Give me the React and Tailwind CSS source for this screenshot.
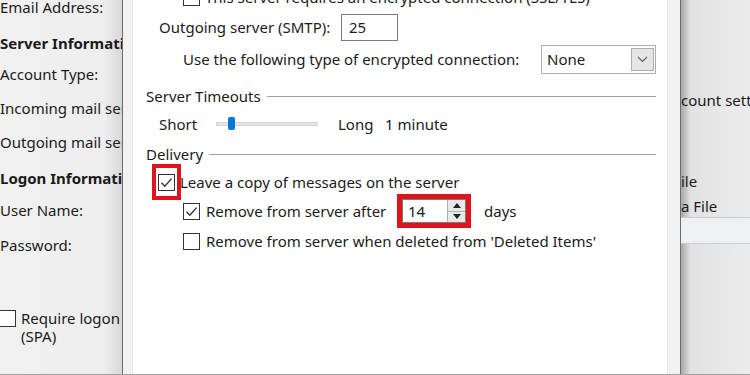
import React from "react";

function Check({ checked }) {
  return (
    <span className="inline-flex w-[17px] h-[17px] shrink-0 border border-[#333333] bg-white items-center justify-center">
      {checked && (
        <svg width="13" height="13" viewBox="0 0 13 13">
          <path d="M1.5 6.8 L4.8 10.2 L11.6 2.6" fill="none" stroke="#333333" strokeWidth="1.4" />
        </svg>
      )}
    </span>
  );
}

function LeftPanel() {
  return (
    <div className="w-[122px] shrink-0 h-full overflow-hidden bg-linear-to-r from-[#f1f1f1] via-[#eeeeee] via-85% to-[#d8d8d8] whitespace-nowrap">
      <div className="h-[20px] leading-[20px] mt-[-3px]">Email Address:</div>
      <div className="h-[20px] leading-[20px] mt-[16px] font-bold">Server Information</div>
      <div className="h-[20px] leading-[20px] mt-[11px]">Account Type:</div>
      <div className="h-[20px] leading-[20px] mt-[14px]">Incoming mail server:</div>
      <div className="h-[20px] leading-[20px] mt-[14px]">Outgoing mail server (SMTP):</div>
      <div className="h-[20px] leading-[20px] mt-[16px] font-bold">Logon Information</div>
      <div className="h-[20px] leading-[20px] mt-[12px]">User Name:</div>
      <div className="h-[20px] leading-[20px] mt-[15px]">Password:</div>
      <div className="flex mt-[54px] ml-[-1px]">
        <div className="pt-[1px]">
          <Check />
        </div>
        <div className="ml-[5px] leading-[18px]">
          <div>Require logon using Secure Password Authentication</div>
          <div>(SPA)</div>
        </div>
      </div>
    </div>
  );
}

function DialogContent() {
  return (
    <div className="w-[534px] shrink-0 h-full bg-white whitespace-nowrap pr-[11px]">
      {/* Row 1 cut at top */}
      <div className="flex items-center h-[22px] mt-[-14px] pl-[50px]">
        <Check />
        <span className="ml-[5px]">This server requires an encrypted connection (SSL/TLS)</span>
      </div>
      {/* SMTP */}
      <div className="flex items-center h-[27px] mt-[6px] pl-[26px]">
        <span className="w-[182px]">Outgoing server (SMTP):</span>
        <div className="w-[57px] h-[27px] border border-[#7a7a7a] flex items-center pl-[7px]">25</div>
      </div>
      {/* Encryption */}
      <div className="flex items-center h-[29px] mt-[4px] pl-[50px]">
        <span className="w-[358px]">Use the following type of encrypted connection:</span>
        <div className="w-[115px] h-[29px] border border-[#adadad] flex items-center justify-between pl-[5px] pr-[1px]">
          <span>None</span>
          <span className="w-[23px] h-[23px] bg-[#e5e5e5] border border-[#adadad] flex items-center justify-center">
            <svg width="11" height="7" viewBox="0 0 11 7">
              <path d="M1 1 L5.5 5.5 L10 1" fill="none" stroke="#606060" strokeWidth="1.1" />
            </svg>
          </span>
        </div>
      </div>
      {/* Server Timeouts */}
      <div className="flex items-center h-[20px] mt-[12px] pl-[13px]">
        <span>Server Timeouts</span>
        <div className="flex-1 h-px bg-[#a0a0a0] ml-[6px]" />
      </div>
      {/* slider */}
      <div className="flex items-center h-[20px] mt-[8px] pl-[26px]">
        <span className="w-[57px]">Short</span>
        <div className="relative w-[102px] h-[4px] bg-[#e6e6e6] border border-[#d6d6d6]">
          <span className="absolute left-[11px] top-[-6px] w-[7px] h-[13px] rounded-[2px] bg-[#0078d7]" />
        </div>
        <span className="ml-[20px] w-[47px]">Long</span>
        <span>1 minute</span>
      </div>
      {/* Delivery */}
      <div className="flex items-center h-[20px] mt-[10px] pl-[13px]">
        <span>Delivery</span>
        <div className="flex-1 h-px bg-[#a0a0a0] ml-[6px]" />
      </div>
      {/* Leave copy */}
      <div className="flex items-center h-[20px] mt-[8px] pl-[19px]">
        <div className="w-[29px] h-[36px] shrink-0 border-[4px] border-[#e0141b] flex items-center justify-center pr-[1px]">
          <Check checked />
        </div>
        <span className="ml-[-1px]">Leave a copy of messages on the server</span>
      </div>
      {/* Remove after */}
      <div className="flex items-center h-[22px] mt-[8px] pl-[50px]">
        <Check checked />
        <span className="ml-[6px] w-[191px]">Remove from server after</span>
        <div className="w-[74px] h-[34px] shrink-0 border-[5px] border-[#e0141b] flex">
          <div className="flex-1 border border-[#7a7a7a] flex items-center pl-[5px] bg-white">
            <span className="flex-1">14</span>
            <div className="w-[18px] h-full flex flex-col border-l border-[#adadad]">
              <span className="flex-1 bg-[#e8e8e8] border-b border-[#adadad] flex items-center justify-center">
                <svg width="8" height="5" viewBox="0 0 8 5"><path d="M0 5 L4 0 L8 5 Z" fill="#222" /></svg>
              </span>
              <span className="flex-1 bg-[#e8e8e8] flex items-center justify-center">
                <svg width="8" height="5" viewBox="0 0 8 5"><path d="M0 0 L8 0 L4 5 Z" fill="#222" /></svg>
              </span>
            </div>
          </div>
        </div>
        <span className="ml-[13px]">days</span>
      </div>
      {/* Remove when deleted */}
      <div className="flex items-center h-[20px] mt-[9px] pl-[50px]">
        <Check />
        <span className="ml-[6px]">Remove from server when deleted from 'Deleted Items'</span>
      </div>
    </div>
  );
}

function RightPanel() {
  return (
    <div className="flex-1 h-full overflow-hidden bg-linear-to-r from-[#a9a9a9] from-0% via-[#e2e2e2] via-[14%] to-[#ececec] whitespace-nowrap">
      <div className="h-[20px] leading-[20px] mt-[90px]">count settings</div>
      <div className="h-[20px] leading-[20px] mt-[61px]">ile</div>
      <div className="h-[20px] leading-[20px] mt-[5px]">a File</div>
      <div className="h-[27px] mt-[1px] border-y border-[#c5ccd3] bg-[#eef0f2]" />
    </div>
  );
}

export default function App() {
  return (
    <div className="w-[750px] h-[375px] overflow-hidden flex border-b border-[#a0a0a0] bg-[#f0f0f0] font-['Noto_Sans',sans-serif] text-[15px] text-[#1b1b1b]">
      <LeftPanel />
      <div className="w-px shrink-0 bg-[#6f6f6f]" />
      <div className="w-[10px] shrink-0 bg-[#f2f2f2] border-r border-[#e4e4e4]" />
      <DialogContent />
      <div className="w-[13px] shrink-0 bg-[#f2f2f2] border-l border-[#e4e4e4]" />
      <div className="w-px shrink-0 bg-[#6d6d6d]" />
      <RightPanel />
    </div>
  );
}
